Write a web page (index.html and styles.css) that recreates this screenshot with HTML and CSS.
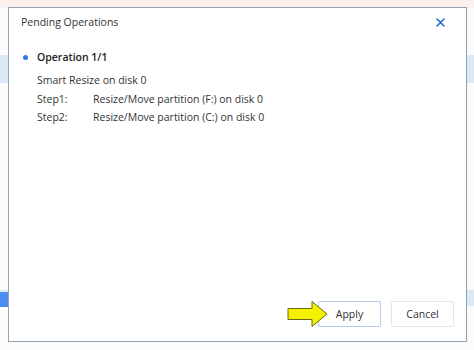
FILE: index.html
```html
<!DOCTYPE html>
<html lang="en">
<head>
    <meta charset="UTF-8">
    <title>Pending Operations</title>
    <link rel="stylesheet" href="styles.css">
</head>
<body>
    <div class="backdrop">
        <div class="strip strip-top"></div>
        <div class="strip strip-blue"></div>
        <div class="line"></div>
    </div>

    <div class="dialog">
        <div class="dialog-header">
            <span class="dialog-title">Pending Operations</span>
            <button class="close" aria-label="Close">
                <svg width="9" height="9" viewBox="0 0 9 9">
                    <path d="M1 1 L8 8 M8 1 L1 8" stroke="#2a6ad8" stroke-width="1.6" stroke-linecap="round"/>
                </svg>
            </button>
        </div>

        <div class="dialog-body">
            <div class="op-title"><span class="dot"></span>Operation 1/1</div>
            <div class="op-list">
                <div class="op-row">Smart Resize on disk 0</div>
                <div class="op-row"><span class="step">Step1:</span>Resize/Move partition (F:) on disk 0</div>
                <div class="op-row"><span class="step">Step2:</span>Resize/Move partition (C:) on disk 0</div>
            </div>
        </div>

        <div class="dialog-footer">
            <svg class="arrow" width="42" height="28" viewBox="0 0 42 28">
                <path d="M1 8.5 H25 V1.5 L40 14 L25 26.5 V19.5 H1 Z" fill="#f4f000" stroke="#6b6a10" stroke-width="1"/>
            </svg>
            <button class="btn btn-primary">Apply</button>
            <button class="btn">Cancel</button>
        </div>
    </div>
</body>
</html>
```

FILE: styles.css
```css
* {
    margin: 0;
    padding: 0;
    box-sizing: border-box;
}

body {
    background: #fbfbfb;
    font-family: 'Open Sans', 'Noto Sans', sans-serif;
    color: #333;
    width: 474px;
    height: 350px;
    overflow: hidden;
    position: relative;
    padding: 7px 7px 0 8px;
}

/* page behind the dialog */
.backdrop {
    position: absolute;
    inset: 0;
}

.strip {
    position: absolute;
    left: 0;
    right: 0;
}

.strip-top {
    top: 0;
    height: 8px;
    background: #fdf1ee;
}

.strip-blue {
    top: 55px;
    height: 28px;
    background: #dde9f7;
}

.line {
    position: absolute;
    left: 0;
    right: 0;
    top: 290px;
    height: 16px;
    background: #dde9f7;
    border-top: 1px solid #e4e4e4;
}

.line::before {
    content: '';
    position: absolute;
    left: 0;
    top: 1px;
    width: 8px;
    height: 15px;
    background: #4a8cf0;
}

.dialog {
    position: relative;
    height: 335px;
    background: #fff;
    border: 1px solid #90a2b4;
    display: flex;
    flex-direction: column;
}

.dialog-header {
    display: flex;
    justify-content: space-between;
    align-items: center;
    height: 28px;
    padding: 0 21px 0 12px;
}

.dialog-title {
    font-size: 10.5px;
    color: #333;
}

.close {
    border: none;
    background: none;
    display: flex;
}

.dialog-body {
    flex: 1;
    padding: 12px 0 0 14px;
}

.op-title {
    display: flex;
    align-items: center;
    font-size: 10.5px;
    font-weight: 600;
    color: #222;
    height: 18px;
}

.dot {
    width: 5px;
    height: 5px;
    border-radius: 50%;
    background: #2f7ae8;
    margin-right: 9px;
}

.op-list {
    padding: 5px 0 0 14px;
}

.op-row {
    font-size: 10.5px;
    line-height: 18.5px;
    color: #333;
}

.step {
    display: inline-block;
    width: 56px;
}

.dialog-footer {
    display: flex;
    justify-content: flex-end;
    align-items: center;
    gap: 10px;
    padding: 0 12px 13px 0;
}

.arrow {
    margin-right: -21px;
    position: relative;
    z-index: 1;
}

.btn {
    width: 63px;
    height: 26px;
    background: #fff;
    border: 1px solid #e6e6e6;
    border-radius: 2px;
    font-family: inherit;
    font-size: 10.5px;
    color: #333;
}

.btn-primary {
    border-color: #b8cbe8;
}
```
